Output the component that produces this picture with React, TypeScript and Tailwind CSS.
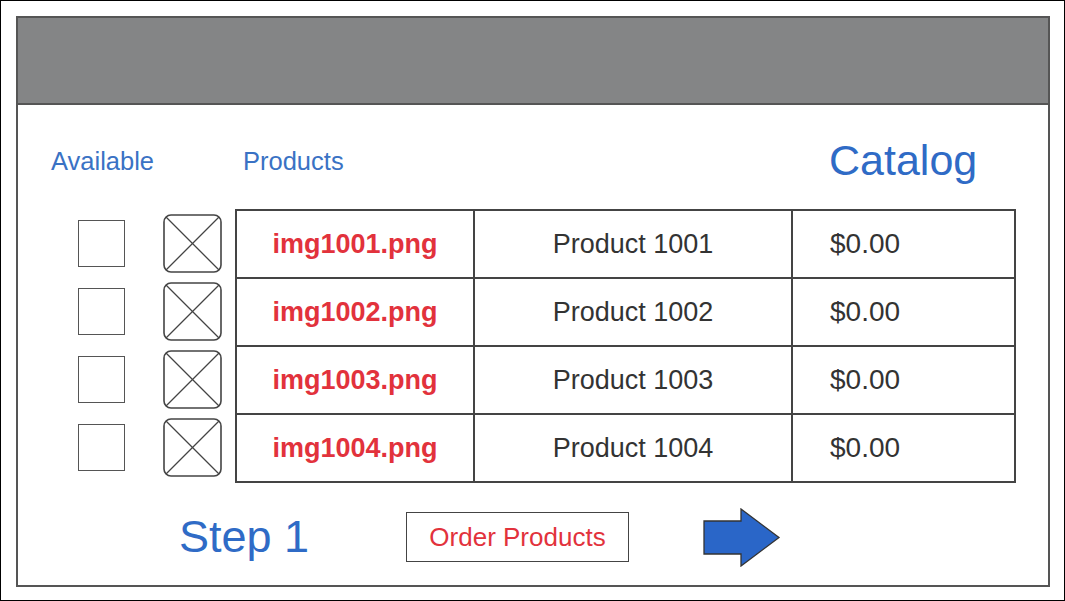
const rows = [
  { img: 'img1001.png', name: 'Product 1001', price: '$0.00' },
  { img: 'img1002.png', name: 'Product 1002', price: '$0.00' },
  { img: 'img1003.png', name: 'Product 1003', price: '$0.00' },
  { img: 'img1004.png', name: 'Product 1004', price: '$0.00' },
];

const font = { fontFamily: '"Liberation Sans", Arial, sans-serif' };

const ImagePlaceholder = () => (
  <svg width="59" height="59" viewBox="0 0 59 59" className="block">
    <rect x="1" y="1" width="57" height="57" rx="7" fill="white" stroke="#444" strokeWidth="1.6" />
    <line x1="3" y1="3" x2="56" y2="56" stroke="#444" strokeWidth="1.3" />
    <line x1="56" y1="3" x2="3" y2="56" stroke="#444" strokeWidth="1.3" />
  </svg>
);

const Arrow = () => (
  <svg width="78" height="59" viewBox="0 0 78 59" className="block">
    <polygon
      points="1,13 38,13 38,1 76,29.5 38,58 38,46 1,46"
      fill="#2a66c8"
      stroke="#333"
      strokeWidth="1.3"
    />
  </svg>
);

export default function App() {
  return (
    <div
      className="h-[601px] w-[1065px] border border-black bg-white px-[15px] pt-[15px]"
      style={font}
    >
      <div className="h-[571px] w-[1034px] border-2 border-[#555] bg-white">
        {/* header bar */}
        <div className="h-[87px] border-b-2 border-[#555] bg-[#848586]" />

        <div className="pt-[31px]">
          {/* titles */}
          <div className="flex h-[48px] items-center pl-[33px]">
            <div className="mt-[3px] w-[192px] text-[25.5px] text-[#3a72c4]">Available</div>
            <div className="mt-[3px] w-[586px] text-[25.5px] text-[#3a72c4]">Products</div>
            <div className="text-[43px] leading-none text-[#2f6bc6]">Catalog</div>
          </div>

          {/* list + table */}
          <div className="mt-[25px] flex pl-[60px]">
            <div className="flex w-[47px] flex-col">
              {rows.map((r) => (
                <div key={r.img} className="flex h-[68px] items-center">
                  <div className="h-[47px] w-[47px] border-[1.5px] border-[#555]" />
                </div>
              ))}
            </div>
            <div className="ml-[38px] flex w-[59px] flex-col">
              {rows.map((r) => (
                <div key={r.img} className="flex h-[68px] items-center">
                  <ImagePlaceholder />
                </div>
              ))}
            </div>
            <table className="ml-[13px] border-collapse border-2 border-[#444]">
              <tbody>
                {rows.map((r) => (
                  <tr key={r.img} className="h-[68px]">
                    <td className="w-[238px] border-2 border-[#444] text-center text-[27px] font-bold text-[#e2323c]">
                      {r.img}
                    </td>
                    <td className="w-[318px] border-2 border-[#444] text-center text-[27px] text-[#333]">
                      {r.name}
                    </td>
                    <td className="w-[223px] border-2 border-[#444] pl-[37px] text-[28px] text-[#333]">
                      {r.price}
                    </td>
                  </tr>
                ))}
              </tbody>
            </table>
          </div>

          {/* footer */}
          <div className="mt-[24px] flex h-[60px] items-center pl-[161px]">
            <div className="mb-[2px] w-[227px] text-[45px] leading-none text-[#2f6bc6]">Step 1</div>
            <button className="flex h-[50px] w-[223px] items-center justify-center border-[1.5px] border-[#444] text-[26px] text-[#e2323c]">
              Order Products
            </button>
            <div className="ml-[74px]">
              <Arrow />
            </div>
          </div>
        </div>
      </div>
    </div>
  );
}
